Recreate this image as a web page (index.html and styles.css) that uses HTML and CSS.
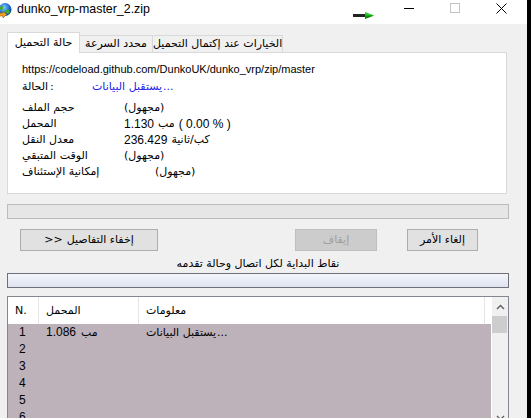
FILE: index.html
```html
<!DOCTYPE html>
<html lang="ar">
<head>
<meta charset="utf-8">
<title>dunko_vrp-master_2.zip</title>
<link rel="stylesheet" href="styles.css">
</head>
<body>
<div class="window">
  <div class="titlebar">
    <svg class="app-icon" width="16" height="16" viewBox="0 0 16 16">
      <defs>
        <radialGradient id="g1" cx="0.4" cy="0.35" r="0.7">
          <stop offset="0" stop-color="#8fd0ff"/>
          <stop offset="0.6" stop-color="#1f6fd0"/>
          <stop offset="1" stop-color="#0a3a8a"/>
        </radialGradient>
      </defs>
      <circle cx="8" cy="7.5" r="6.5" fill="url(#g1)"/>
      <path d="M4 4 C6 3 7 5 6 7 C5 9 3 8 2.5 6.5 Z" fill="#3fae2a"/>
      <path d="M9 8 C11 7 13 8 12.5 10.5 C11.5 12.5 9.5 12 9 10.5 Z" fill="#3fae2a"/>
      <path d="M1 11 L6 11 L6 9 L9.5 12.5 L6 16 L6 14 L1 14 Z" fill="#f0a020" stroke="#a05a00" stroke-width="0.6"/>
    </svg>
    <span class="title">dunko_vrp-master_2.zip</span>
    <div class="controls">
      <svg class="ad-arrow" width="21" height="8" viewBox="0 0 21 8">
        <rect x="0" y="2" width="14" height="3" fill="#222"/>
        <polygon points="12,0 21,3.5 12,7" fill="#22cc22"/>
        <polygon points="12,3.5 21,3.5 12,7" fill="#118811"/>
      </svg>
      <div class="ctl">
        <svg width="10" height="10" viewBox="0 0 10 10"><path d="M0 5.5 H10" stroke="#000" stroke-width="1"/></svg>
      </div>
      <div class="ctl">
        <svg width="10" height="10" viewBox="0 0 10 10"><rect x="0.5" y="0.5" width="9" height="9" fill="none" stroke="#c4c4c4" stroke-width="1"/></svg>
      </div>
      <div class="ctl">
        <svg width="11" height="11" viewBox="0 0 11 11"><path d="M0.5 0.5 L10.5 10.5 M10.5 0.5 L0.5 10.5" stroke="#000" stroke-width="1"/></svg>
      </div>
    </div>
  </div>

  <div class="content">
    <div class="tabs">
      <div class="tab tab-status active">حالة التحميل</div>
      <div class="tab tab-speed">محدد السرعة</div>
      <div class="tab tab-options">الخيارات عند إكتمال التحميل</div>
    </div>
    <div class="panel">
      <div class="url">https://codeload.github.com/DunkoUK/dunko_vrp/zip/master</div>
      <div class="status-line">
        <span class="status-label"><span>الحالة</span><span>:</span></span>
        <span class="status-value"><span>يستقبل البيانات</span><span>...</span></span>
      </div>
      <div class="info">
        <div class="row"><span class="lbl">حجم الملف</span><span class="val">(مجهول)</span></div>
        <div class="row"><span class="lbl">المحمل</span><span class="val"><span class="num">1.130</span><span class="unit">مب</span><span class="pct">( 0.00 % )</span></span></div>
        <div class="row"><span class="lbl">معدل النقل</span><span class="val"><span class="num">236.429</span><span class="unit">كب/ثانية</span></span></div>
        <div class="row"><span class="lbl">الوقت المتبقي</span><span class="val">(مجهول)</span></div>
        <div class="row"><span class="lbl">إمكانية الإستئناف</span><span class="val shifted">(مجهول)</span></div>
      </div>
    </div>

    <div class="progress"></div>

    <div class="buttons">
      <div class="btn btn-details"><span>&gt;&gt;</span><span>إخفاء التفاصيل</span></div>
      <div class="btn btn-pause disabled">إيقاف</div>
      <div class="btn btn-cancel">إلغاء الأمر</div>
    </div>

    <div class="conn-label">نقاط البداية لكل اتصال وحالة تقدمه</div>
    <div class="conn-bar"></div>

    <div class="table">
      <div class="list">
        <div class="thead">
          <div class="c c-n">N.</div>
          <div class="c c-size">المحمل</div>
          <div class="c c-info">معلومات</div>
          <div class="c c-rest"></div>
        </div>
        <div class="tbody">
          <div class="tr"><div class="c c-n">1</div><div class="c c-size"><span class="num">1.086</span><span class="unit">مب</span></div><div class="c c-info"><span>يستقبل البيانات</span><span>...</span></div></div>
          <div class="tr"><div class="c c-n">2</div><div class="c c-size"></div><div class="c c-info"></div></div>
          <div class="tr"><div class="c c-n">3</div><div class="c c-size"></div><div class="c c-info"></div></div>
          <div class="tr"><div class="c c-n">4</div><div class="c c-size"></div><div class="c c-info"></div></div>
          <div class="tr"><div class="c c-n">5</div><div class="c c-size"></div><div class="c c-info"></div></div>
          <div class="tr"><div class="c c-n">6</div><div class="c c-size"></div><div class="c c-info"></div></div>
        </div>
      </div>
      <div class="scrollbar">
        <div class="arrow up">
          <svg width="9" height="6" viewBox="0 0 9 6"><path d="M1 5 L4.5 1.5 L8 5" fill="none" stroke="#606060" stroke-width="1.4"/></svg>
        </div>
        <div class="thumb"></div>
        <div class="track"></div>
        <div class="arrow down">
          <svg width="9" height="6" viewBox="0 0 9 6"><path d="M1 1 L4.5 4.5 L8 1" fill="none" stroke="#606060" stroke-width="1.4"/></svg>
        </div>
      </div>
    </div>
  </div>
</div>
</body>
</html>
```

FILE: styles.css
```css
html, body {
  margin: 0;
  padding: 0;
  background: #000;
}
body {
  width: 531px;
  height: 418px;
  overflow: hidden;
  font-family: "Liberation Sans", "DejaVu Sans", sans-serif;
  font-size: 11px;
  color: #000;
}
.window {
  width: 527px;
  height: 418px;
  background: #f0f0f0;
  overflow: hidden;
  direction: ltr;
}
.titlebar {
  height: 24px;
  background: #fff;
  display: flex;
  align-items: flex-start;
}
.app-icon {
  margin-left: -3px;
  margin-top: 2px;
  flex: none;
}
.title {
  margin-left: 4px;
  margin-top: 1px;
  line-height: 16px;
  font-family: "Liberation Sans", sans-serif;
  font-size: 12.4px;
  color: #000;
}
.controls {
  margin-left: auto;
  margin-right: 3px;
  display: flex;
  align-items: flex-start;
}
.ad-arrow {
  margin-top: 12px;
  margin-right: 12px;
}
.ctl {
  width: 46px;
  height: 16px;
  display: flex;
  align-items: center;
  justify-content: center;
}
.content {
  padding-left: 7px;
  padding-right: 18px;
}
.tabs {
  margin-top: 8px;
  height: 20px;
  display: flex;
  align-items: flex-end;
}
.tab {
  box-sizing: border-box;
  height: 17px;
  line-height: 16px;
  border: 1px solid #d9d9d9;
  border-bottom: none;
  border-left: none;
  background: #f0f0f0;
  font-family: "DejaVu Sans", sans-serif;
  font-size: 11px;
  text-align: center;
  white-space: nowrap;
  overflow: hidden;
}
.tab-status {
  width: 73px;
}
.tab-speed {
  width: 73px;
}
.tab-options {
  width: 130px;
}
.tab.active {
  height: 21px;
  line-height: 19px;
  border-left: 1px solid #d9d9d9;
  background: #fff;
  margin-bottom: -1px;
  position: relative;
  z-index: 1;
}
.panel {
  margin-right: 2px;
  height: 132px;
  background: #fff;
  border: 1px solid #d9d9d9;
  padding-left: 14px;
  padding-top: 8px;
}
.url {
  line-height: 16px;
  font-family: "Liberation Sans", sans-serif;
  font-size: 11px;
}
.status-line {
  margin-top: 2px;
  line-height: 16px;
  display: flex;
  font-family: "DejaVu Sans", sans-serif;
  font-size: 11px;
}
.status-label {
  width: 70px;
  display: flex;
  gap: 2px;
}
.status-value {
  color: #2222ee;
  display: flex;
  gap: 1px;
}
.info {
  margin-top: 5px;
  font-family: "DejaVu Sans", sans-serif;
  font-size: 11px;
}
.row {
  display: flex;
  height: 16px;
  line-height: 16px;
}
.lbl {
  width: 102px;
  flex: none;
}
.val {
  display: flex;
  gap: 4px;
}
.val.shifted {
  margin-left: 31px;
}
.num {
  font-family: "Liberation Sans", sans-serif;
  font-size: 12px;
}
.pct {
  font-family: "Liberation Sans", sans-serif;
  font-size: 12px;
  white-space: pre;
}
.progress {
  margin-top: 10px;
  height: 13px;
  background: #e6e6e6;
  border: 1px solid #bcbcbc;
}
.buttons {
  margin-top: 10px;
  display: flex;
  height: 22px;
}
.btn {
  height: 20px;
  line-height: 20px;
  display: flex;
  justify-content: center;
  gap: 4px;
  background: #e1e1e1;
  border: 1px solid #adadad;
  font-family: "DejaVu Sans", sans-serif;
  font-size: 11px;
}
.btn-details {
  margin-left: 13px;
  width: 136px;
}
.btn-pause {
  margin-left: 137px;
  width: 80px;
}
.btn.disabled {
  background: #cccccc;
  border-color: #bfbfbf;
  color: #a0a0a0;
}
.btn-cancel {
  margin-left: 30px;
  width: 69px;
}
.conn-label {
  margin-top: 6px;
  line-height: 14px;
  text-align: center;
  font-family: "DejaVu Sans", sans-serif;
  font-size: 11px;
}
.conn-bar {
  margin-top: 2px;
  height: 13px;
  border: 1px solid #6f6f7a;
  background: linear-gradient(#f4f6fb, #dde3ef);
}
.table {
  margin-top: 8px;
  height: 130px;
  border: 1px solid #828790;
  display: flex;
  background: #fff;
}
.list {
  width: 484px;
  flex: none;
  display: flex;
  flex-direction: column;
}
.thead {
  height: 27px;
  flex: none;
  display: flex;
  background: #fff;
  line-height: 27px;
  font-family: "DejaVu Sans", sans-serif;
  font-size: 11px;
}
.thead .c {
  border-right: 1px solid #e5e5e5;
}
.thead .c-rest {
  border-right: none;
  flex: 1;
}
.c {
  box-sizing: border-box;
  padding-left: 7px;
  white-space: nowrap;
}
.c-n {
  width: 31px;
}
.c-size {
  width: 100px;
  display: flex;
  gap: 5px;
}
.c-info {
  width: 346px;
  display: flex;
  gap: 1px;
}
.c-rest {
  width: 7px;
}
.tbody {
  flex: 1;
  background: #bdb1ba;
  margin-right: 1px;
  font-family: "DejaVu Sans", sans-serif;
  font-size: 11px;
}
.tr {
  height: 17px;
  line-height: 17px;
  display: flex;
}
.tr .c-n {
  padding-left: 11px;
  font-family: "Liberation Sans", sans-serif;
  font-size: 12px;
}
.scrollbar {
  width: 16px;
  flex: none;
  display: flex;
  flex-direction: column;
  background: #f0f0f0;
}
.arrow {
  height: 19px;
  display: flex;
  align-items: center;
  justify-content: center;
}
.thumb {
  height: 17px;
  background: #cdcdcd;
  margin-right: 1px;
}
.track {
  flex: 1;
}
.arrow.down {
  height: 12px;
  align-items: flex-start;
}
```
